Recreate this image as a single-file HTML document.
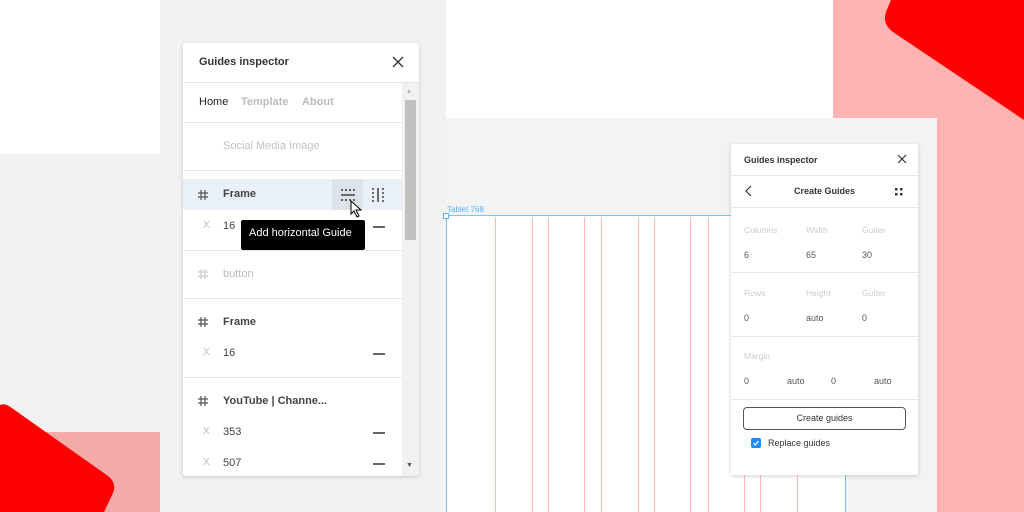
<!DOCTYPE html>
<html style="width:1024px;height:512px;overflow:hidden"><head><style>
*{margin:0;padding:0;box-sizing:border-box}
body{width:1024px;height:512px;overflow:hidden;position:relative;background:#f2f2f2;font-family:"Liberation Sans",sans-serif}
.a{position:absolute}
.t{position:absolute;white-space:nowrap}
.hl{position:absolute;left:0;right:0;height:1px;background:#e6e6e6}
.hs{position:absolute;left:14px;width:12px;height:12px}
</style></head><body>
<div class="a" style="left:0;top:0;width:160px;height:154px;background:#fff"></div>
<div class="a" style="left:446px;top:0;width:387px;height:118px;background:#fff"></div>
<div class="a" style="left:833px;top:0;width:191px;height:512px;background:#ffb3b3"></div>
<div class="a" style="left:446px;top:118px;width:491px;height:394px;background:#f3f3f3"></div>
<div class="a" style="left:45px;top:432px;width:115px;height:80px;background:#f6abab"></div>
<svg class="a" style="left:0;top:0" width="1024" height="512">
<path d="M891 0 L1024 0 L1024 120 L893 32 Q882 24 886 12 Z" fill="#ff0000"/>
<path d="M0 405 Q4 403 9 406 L108 476 Q117 483 113 493 L104 512 L0 512 Z" fill="#ff0000"/>
</svg>
<svg width="0" height="0" style="position:absolute"><defs><g id="hash"><path d="M4 1v10M8 1v10M1 4h10M1 8h10" stroke-width="1.2" fill="none"/></g></defs></svg>

<div class="t" style="left:447px;top:205px;font-size:8px;color:#59b4ff">Tablet 768</div>
<div class="a" style="left:446px;top:215px;width:400px;height:320px;background:#fff;border:1.5px solid #7cc2ff"></div>
<div class="a" style="left:443px;top:213px;width:6px;height:6px;border:1px solid #59b4ff;background:#fff"></div>
<svg class="a" style="left:0;top:0" width="1024" height="512">
<g stroke="#ffb9b9" stroke-width="1">
<line x1="495.5" y1="217" x2="495.5" y2="512"/><line x1="532.5" y1="217" x2="532.5" y2="512"/>
<line x1="548.5" y1="217" x2="548.5" y2="512"/><line x1="584.5" y1="217" x2="584.5" y2="512"/>
<line x1="601.5" y1="217" x2="601.5" y2="512"/><line x1="638.5" y1="217" x2="638.5" y2="512"/>
<line x1="654.5" y1="217" x2="654.5" y2="512"/><line x1="690.5" y1="217" x2="690.5" y2="512"/>
<line x1="708.5" y1="217" x2="708.5" y2="512"/><line x1="744.5" y1="217" x2="744.5" y2="512"/>
<line x1="760.5" y1="217" x2="760.5" y2="512"/><line x1="797.5" y1="217" x2="797.5" y2="512"/>
</g></svg>

<div class="a" style="left:183px;top:43px;width:236px;height:433px;background:#fff;border-radius:3px;box-shadow:0 1px 4px rgba(0,0,0,.18);overflow:hidden">
 <div class="t" style="left:16px;top:13px;font-size:11px;font-weight:bold;color:#333">Guides inspector</div>
 <svg class="a" style="left:209px;top:13px" width="12" height="12"><path d="M1 1L11 11M11 1L1 11" stroke="#333" stroke-width="1.3"/></svg>
 <div class="hl" style="top:39px"></div>
 <div class="t" style="left:16px;top:53px;font-size:11px;color:#222">Home</div>
 <div class="t" style="left:58px;top:53px;font-size:11px;color:#bbb;font-weight:bold">Template</div>
 <div class="t" style="left:119px;top:53px;font-size:11px;color:#bbb;font-weight:bold">About</div>
 <div class="hl" style="top:79px;right:17px"></div>
 <div class="t" style="left:40px;top:97px;font-size:11px;color:#c2c2c2">Social Media Image</div>
 <div class="hl" style="top:127px;right:17px"></div>
 <div class="a" style="left:0;top:136px;width:219px;height:31px;background:#e9f0f8"></div>
 <div class="a" style="left:149px;top:136px;width:31px;height:31px;background:#dde3ea"></div>
 <svg class="hs" style="top:146px" stroke="#555"><use href="#hash"/></svg>
 <div class="t" style="left:40px;top:145px;font-size:11px;color:#444;font-weight:bold">Frame</div>
 <svg class="a" style="left:157px;top:145px" width="16" height="14"><g stroke="#333" stroke-width="1.4"><path d="M1 2h2M5 2h2M9 2h2M13 2h2M1 12h2M5 12h2M9 12h2M13 12h2" /><path d="M1 7h14"/></g></svg>
 <svg class="a" style="left:188px;top:144px" width="14" height="16"><g stroke="#333" stroke-width="1.4"><path d="M2 1v2M2 5v2M2 9v2M2 13v2M12 1v2M12 5v2M12 9v2M12 13v2"/><path d="M7 1v14"/></g></svg>
 <svg class="a" style="left:166px;top:157px" width="14" height="18"><path d="M2 1L2 14L5 11L8 17L10 16L7 10L12 10Z" fill="#fff" stroke="#000" stroke-width="1"/></svg>
 <div class="t" style="left:20px;top:177px;font-size:10px;color:#bbb">X</div>
 <div class="t" style="left:40px;top:177px;font-size:11px;color:#444">16</div>
 <div class="a" style="left:190px;top:183px;width:12px;height:1.5px;background:#666"></div>
 <div class="a" style="left:58px;top:177px;width:124px;height:30px;background:#000;border-radius:2px"></div>
 <div class="t" style="left:66px;top:184px;font-size:11px;color:#fff">Add horizontal Guide</div>
 <div class="hl" style="top:207px;right:17px"></div>
 <svg class="hs" style="top:225px" stroke="#ccc"><use href="#hash"/></svg>
 <div class="t" style="left:40px;top:225px;font-size:11px;color:#bbb">button</div>
 <div class="hl" style="top:255px;right:17px"></div>
 <svg class="hs" style="top:273px" stroke="#555"><use href="#hash"/></svg>
 <div class="t" style="left:40px;top:273px;font-size:11px;color:#444;font-weight:bold">Frame</div>
 <div class="t" style="left:20px;top:304px;font-size:10px;color:#bbb">X</div>
 <div class="t" style="left:40px;top:304px;font-size:11px;color:#444">16</div>
 <div class="a" style="left:190px;top:310px;width:12px;height:1.5px;background:#666"></div>
 <div class="hl" style="top:334px;right:17px"></div>
 <svg class="hs" style="top:352px" stroke="#555"><use href="#hash"/></svg>
 <div class="t" style="left:40px;top:352px;font-size:11px;color:#444;font-weight:bold">YouTube | Channe...</div>
 <div class="t" style="left:20px;top:383px;font-size:10px;color:#bbb">X</div>
 <div class="t" style="left:40px;top:383px;font-size:11px;color:#444">353</div>
 <div class="a" style="left:190px;top:389px;width:12px;height:1.5px;background:#666"></div>
 <div class="t" style="left:20px;top:414px;font-size:10px;color:#bbb">X</div>
 <div class="t" style="left:40px;top:414px;font-size:11px;color:#444">507</div>
 <div class="a" style="left:190px;top:420px;width:12px;height:1.5px;background:#666"></div>
 <div class="a" style="left:219px;top:40px;width:17px;height:393px;background:#f1f1f1"></div>
 <div class="a" style="left:222px;top:57px;width:11px;height:140px;background:#c1c1c1"></div>
 <div class="t" style="left:223px;top:46px;font-size:6px;color:#aaa">▲</div>
 <div class="t" style="left:223px;top:419px;font-size:7px;color:#555">▼</div>
</div>

<div class="a" style="left:731px;top:144px;width:187px;height:331px;background:#fff;border-radius:2px;box-shadow:0 1px 4px rgba(0,0,0,.18)">
 <div class="t" style="left:13px;top:11px;font-size:9px;font-weight:bold;color:#333">Guides inspector</div>
 <svg class="a" style="left:166px;top:10px" width="10" height="10"><path d="M1 1L9 9M9 1L1 9" stroke="#333" stroke-width="1.2"/></svg>
 <div class="hl" style="top:31px"></div>
 <svg class="a" style="left:14px;top:41px" width="8" height="12"><path d="M6 1L1 6L6 11" stroke="#333" fill="none" stroke-width="1.2"/></svg>
 <div class="t" style="left:63px;top:42px;font-size:9px;font-weight:bold;color:#333">Create Guides</div>
 <svg class="a" style="left:164px;top:44px" width="8" height="8"><g fill="#333"><rect x="0" y="0" width="2.5" height="2.5"/><rect x="5" y="0" width="2.5" height="2.5"/><rect x="0" y="5" width="2.5" height="2.5"/><rect x="5" y="5" width="2.5" height="2.5"/></g></svg>
 <div class="hl" style="top:63px"></div>
 <div class="t" style="left:13px;top:81px;font-size:8.5px;color:#ccc">Columns</div>
 <div class="t" style="left:75px;top:81px;font-size:8.5px;color:#ccc">Width</div>
 <div class="t" style="left:131px;top:81px;font-size:8.5px;color:#ccc">Gutter</div>
 <div class="t" style="left:13px;top:106px;font-size:9px;color:#555">6</div>
 <div class="t" style="left:75px;top:106px;font-size:9px;color:#555">65</div>
 <div class="t" style="left:131px;top:106px;font-size:9px;color:#555">30</div>
 <div class="hl" style="top:128px"></div>
 <div class="t" style="left:13px;top:144px;font-size:8.5px;color:#ccc">Rows</div>
 <div class="t" style="left:75px;top:144px;font-size:8.5px;color:#ccc">Height</div>
 <div class="t" style="left:131px;top:144px;font-size:8.5px;color:#ccc">Gutter</div>
 <div class="t" style="left:13px;top:169px;font-size:9px;color:#555">0</div>
 <div class="t" style="left:75px;top:169px;font-size:9px;color:#555">auto</div>
 <div class="t" style="left:131px;top:169px;font-size:9px;color:#555">0</div>
 <div class="hl" style="top:192px"></div>
 <div class="t" style="left:13px;top:207px;font-size:8.5px;color:#ccc">Margin</div>
 <div class="t" style="left:13px;top:232px;font-size:9px;color:#555">0</div>
 <div class="t" style="left:56px;top:232px;font-size:9px;color:#555">auto</div>
 <div class="t" style="left:100px;top:232px;font-size:9px;color:#555">0</div>
 <div class="t" style="left:143px;top:232px;font-size:9px;color:#555">auto</div>
 <div class="hl" style="top:255px"></div>
 <div class="a" style="left:12px;top:263px;width:163px;height:23px;border:1.2px solid #555;border-radius:4px"></div>
 <div class="t" style="left:12px;top:269px;width:163px;text-align:center;font-size:9px;color:#333">Create guides</div>
 <div class="a" style="left:20px;top:294px;width:10px;height:10px;background:#1a8cff;border-radius:2px"></div>
 <svg class="a" style="left:21px;top:295px" width="8" height="8"><path d="M1.5 4L3.3 6L6.5 2" stroke="#fff" fill="none" stroke-width="1.3"/></svg>
 <div class="t" style="left:37px;top:294px;font-size:9px;color:#333">Replace guides</div>
</div>
</body></html>
